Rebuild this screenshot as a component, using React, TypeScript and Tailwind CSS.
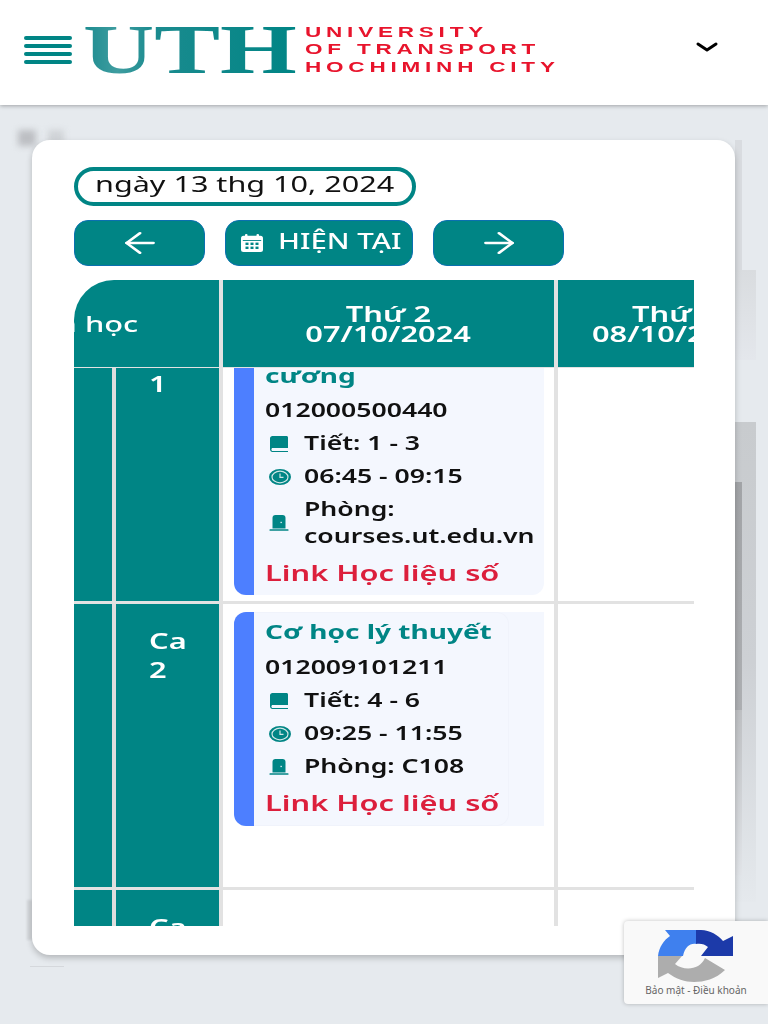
import { ArrowLeft, ArrowRight } from 'lucide-react';
import type { ReactNode } from 'react';

// the reference is stretched sideways, so text goes through this
function Wide({ children, origin = 'origin-left', className = '' }: { children: ReactNode; origin?: string; className?: string }) {
  return <span className={`inline-block whitespace-nowrap scale-x-[1.4] ${origin} ${className}`}>{children}</span>;
}

function BookIcon() {
  return (
    <svg viewBox="0 0 20 16" className="w-[20px] h-[16px]" fill="currentColor">
      <path d="M3.5 0H17.5C18.4 0 19 0.6 19 1.5V12H3.8C2.8 12 2.4 12.7 2.4 13.5C2.4 14.3 2.8 15 3.8 15H19V16H3.5C2 16 1 14.8 1 13.2V2.5C1 1 2 0 3.5 0Z" />
    </svg>
  );
}

function ClockIcon() {
  return (
    <svg viewBox="0 0 22 16" className="w-[22px] h-[16px]">
      <ellipse cx="11" cy="8" rx="11" ry="8" fill="currentColor" />
      <ellipse cx="11" cy="8" rx="8" ry="5.8" fill="none" stroke="#cfe6e6" strokeWidth="1.2" />
      <path d="M11 4.5V8.3H14.5" fill="none" stroke="#cfe6e6" strokeWidth="1.2" />
    </svg>
  );
}

function DoorIcon() {
  return (
    <svg viewBox="0 0 20 16" className="w-[20px] h-[16px]" fill="currentColor">
      <path d="M3.5 13.5V3C3.5 1.2 4.5 0 6.5 0H13.5C15.5 0 16.5 1.2 16.5 3V13.5Z" />
      <rect x="0.5" y="14.2" width="19" height="1.6" rx="0.5" />
      <rect x="11.5" y="6.8" width="1.3" height="1.3" fill="#f4f7fe" />
    </svg>
  );
}

function CalendarIcon() {
  return (
    <svg viewBox="0 0 22 18" className="w-[22px] h-[18px]" fill="white">
      <rect x="4" y="0" width="2.5" height="3" rx="1" />
      <rect x="15.5" y="0" width="2.5" height="3" rx="1" />
      <rect x="0" y="1.8" width="22" height="16.2" rx="2.5" />
      <g fill="#008585">
        <rect x="1.8" y="6" width="18.4" height="0.9" />
        <rect x="4.5" y="8.6" width="3" height="2.4" />
        <rect x="9.5" y="8.6" width="3" height="2.4" />
        <rect x="14.5" y="8.6" width="3" height="2.4" />
        <rect x="4.5" y="12.6" width="3" height="2.4" />
        <rect x="9.5" y="12.6" width="3" height="2.4" />
        <rect x="14.5" y="12.6" width="3" height="2.4" />
      </g>
    </svg>
  );
}

function InfoRow({ icon, lines, tall }: { icon: ReactNode; lines: string[]; tall?: boolean }) {
  return (
    <div className={`flex items-center ${tall ? 'h-[60px]' : 'h-[33px]'}`}>
      <span className="w-[39px] pl-[4px] text-[#008585]">{icon}</span>
      <div className="text-[19px] leading-[27px] font-semibold text-[#111]">
        {lines.map((line) => <div key={line}><Wide>{line}</Wide></div>)}
      </div>
    </div>
  );
}

function ClassCard({ title, code, period, time, room, clipped }: { title: string; code: string; period: string; time: string; room: string[]; clipped?: boolean }) {
  return (
    <div className={`relative flex w-[310px] ml-[11px] bg-[#f4f7fe] rounded-bl-xl overflow-hidden ${clipped ? 'h-[227px] rounded-br-xl' : 'h-[214px] rounded-tl-xl mt-[8px]'}`}>
      <div className="w-[20px] bg-[#4d7fff] shrink-0" />
      <div className={`pl-[11px] ${clipped ? '-mt-[6px]' : 'pt-[6px]'}`}>
        <div className="text-[20px] leading-[28px] font-bold text-[#008585]"><Wide>{title}</Wide></div>
        <div className={`text-[19px] leading-[27px] font-semibold text-[#111] ${clipped ? 'mt-[7px]' : 'mt-[8px]'}`}><Wide>{code}</Wide></div>
        <div className="mt-[3px]">
          <InfoRow icon={<BookIcon />} lines={[period]} />
          <InfoRow icon={<ClockIcon />} lines={[time]} />
          <InfoRow icon={<DoorIcon />} lines={room} tall={room.length > 1} />
        </div>
        <div className="text-[22px] leading-[32px] mt-[3px] font-semibold text-[#dc1f3c]"><Wide>Link Học liệu số</Wide></div>
      </div>
      {!clipped && <div className="absolute inset-y-0 left-[20px] w-[255px] rounded-r-xl border-y border-r border-[#f0f3fb]" />}
    </div>
  );
}

function ShiftRow({ height, label, top, children, last }: { height: string; label: string[]; top: string; children?: ReactNode; last?: boolean }) {
  return (
    <div className={`flex ${height} ${last ? '' : 'border-b-[3px] border-[#e2e2e2]'}`}>
      <div className="w-[38px] bg-[#008585] shrink-0" />
      <div className="w-[4px] bg-[#dedede] shrink-0" />
      <div className={`w-[103px] bg-[#008585] shrink-0 pl-[33px] text-white text-[22px] leading-[29px] font-semibold ${top}`}>
        {label.map((l) => <div key={l}><Wide>{l}</Wide></div>)}
      </div>
      <div className="w-[4px] bg-[#e2e2e2] shrink-0" />
      <div className="w-[331px] shrink-0 bg-white">{children}</div>
      <div className="w-[4px] bg-[#e2e2e2] shrink-0" />
      <div className="flex-1 bg-white" />
    </div>
  );
}

export default function App() {
  return (
    <div className="relative h-[1024px] overflow-hidden bg-[#e6eaee] font-['Noto_Sans','Open_Sans',sans-serif]">
      <header className="relative z-10 flex items-center h-[105px] bg-white shadow-[0_1px_4px_rgba(0,0,0,0.3)] pl-[24px] pr-[50px]">
        <div className="flex flex-col gap-[4px] w-[48px] -mt-[6px]">
          <div className="h-[4px] rounded-full bg-[#008585]" />
          <div className="h-[4px] rounded-full bg-[#008585]" />
          <div className="h-[4px] rounded-full bg-[#008585]" />
          <div className="h-[4px] rounded-full bg-[#008585]" />
        </div>
        <div className="flex items-center ml-[14px] -mt-[6px]">
          <div className="-ml-[3px] w-[212px] h-[48px] font-['Liberation_Serif',serif] font-bold text-[69px] leading-[48px]">
            <span className="inline-block origin-left scale-x-[1.43] text-transparent bg-clip-text bg-[linear-gradient(90deg,#1b8b8f_0%,#3f9da0_16%,#1b8b8f_32%,#008585_100%)]">UTH</span>
          </div>
          <div className="ml-[10px] font-['Liberation_Sans',sans-serif] font-bold text-[15px] leading-[17.5px] tracking-[3.2px] text-[#e8142c] origin-left scale-x-[1.5] -mt-[1px]">
            <div>UNIVERSITY</div>
            <div>OF TRANSPORT</div>
            <div>HOCHIMINH CITY</div>
          </div>
        </div>
        <svg viewBox="0 0 22 10" className="ml-auto -mt-[12px] w-[22px] h-[10px]" fill="none" stroke="black" strokeWidth="3" strokeLinecap="round" strokeLinejoin="round">
          <path d="M2 2L11 8L20 2" />
        </svg>
      </header>

      {/* blurred page behind the card */}
      <div className="absolute left-[18px] top-[130px] w-[18px] h-[16px] bg-[#bdbfc3] blur-[3px]" />
      <div className="absolute left-[48px] top-[130px] w-[16px] h-[14px] bg-[#d0d3d7] blur-[3px]" />
      <div className="absolute left-[27px] top-[900px] w-[6px] h-[40px] bg-[#d2d5d9] blur-[1px]" />
      <div className="absolute left-[30px] top-[966px] w-[34px] h-[1px] bg-[#d5d8dc]" />
      <div className="absolute left-[735px] top-[140px] w-[7px] h-[130px] bg-[#d9dce0]" />
      <div className="absolute left-[735px] top-[270px] w-[21px] h-[90px] bg-gradient-to-b from-[#d9dcdf] to-[#e4e7ec]" />
      <div className="absolute left-[735px] top-[422px] w-[21px] h-[480px] bg-gradient-to-b from-[#c8cbce] via-[#cdd0d4] to-[#e5e9ed]" />
      <div className="absolute left-[735px] top-[482px] w-[7px] h-[228px] bg-gradient-to-b from-[#a3a5a8] to-[#aeb0b3]" />
      <div className="absolute left-[735px] top-[710px] w-[7px] h-[165px] bg-gradient-to-b from-[#bfc1c4] to-[#e2e5e9]" />

      <main className="relative mx-[32px] mt-[35px] w-[703px] h-[815px] bg-white rounded-[18px] shadow-[0_3px_6px_rgba(0,0,0,0.22)] pl-[42px] pt-[27px]">
        <div className="flex items-center w-[342px] h-[39px] border-[4px] border-[#008585] rounded-full pl-[17px] bg-white text-[22px] text-[#111]">
          <Wide className="-mt-[7px] scale-x-[1.39]">ngày 13 thg 10, 2024</Wide>
        </div>

        <div className="flex gap-[20px] mt-[14px] text-white">
          <button className="flex items-center justify-center w-[131px] h-[46px] rounded-[14px] bg-[#008585] border border-[#0a70b0]">
            <ArrowLeft className="w-[34px] h-[34px] scale-x-[1.35]" strokeWidth={1.6} />
          </button>
          <button className="flex items-center w-[188px] h-[46px] rounded-[14px] bg-[#008585] border border-[#0a70b0] pl-[15px]">
            <CalendarIcon />
            <span className="ml-[15px] text-[21px] -mt-[3px] font-medium"><Wide>HIỆN TẠI</Wide></span>
          </button>
          <button className="flex items-center justify-center w-[131px] h-[46px] rounded-[14px] bg-[#008585] border border-[#0a70b0]">
            <ArrowRight className="w-[34px] h-[34px] scale-x-[1.35]" strokeWidth={1.6} />
          </button>
        </div>

        <div className="mt-[14px] w-[620px] h-[646px] overflow-hidden">
          <div className="flex h-[88px] border-b border-[#e2e2e2] text-white">
            <div className="w-[145px] shrink-0 bg-[#008585] rounded-tl-[40px] overflow-hidden flex items-center justify-end pr-[81px] text-[22px] font-medium">
              <Wide origin="origin-right">Môn học</Wide>
            </div>
            <div className="w-[4px] bg-[#e2e2e2] shrink-0" />
            <div className="w-[331px] shrink-0 bg-[#008585] flex flex-col items-center justify-center pb-[2px] text-[22px] leading-[20px] font-semibold">
              <Wide origin="origin-center">Thứ 2</Wide>
              <Wide origin="origin-center">07/10/2024</Wide>
            </div>
            <div className="w-[4px] bg-[#e2e2e2] shrink-0" />
            <div className="flex-1 bg-[#008585] overflow-hidden flex flex-col items-start pl-[34px] justify-center pb-[2px] text-[22px] leading-[20px] font-semibold">
              <div className="pl-[40px]"><Wide>Thứ 3</Wide></div>
              <Wide>08/10/2024</Wide>
            </div>
          </div>
          <ShiftRow height="h-[236px]" label={['1']} top="pt-[1px]">
            <ClassCard clipped title="cương" code="012000500440" period="Tiết: 1 - 3" time="06:45 - 09:15" room={['Phòng:', 'courses.ut.edu.vn']} />
          </ShiftRow>
          <ShiftRow height="h-[286px]" label={['Ca', '2']} top="pt-[22px]">
            <ClassCard title="Cơ học lý thuyết" code="012009101211" period="Tiết: 4 - 6" time="09:25 - 11:55" room={['Phòng: C108']} />
          </ShiftRow>
          <ShiftRow height="h-[60px]" label={['Ca']} top="pt-[22px]" last />
        </div>
      </main>

      {/* recaptcha badge */}
      <div className="absolute left-[624px] top-[921px] w-[144px] h-[83px] bg-[#f9f9f9] rounded-l-[4px] shadow-[0_0_4px_rgba(0,0,0,0.25)]">
        <svg viewBox="0 0 75 52" className="w-[75px] h-[52px] ml-[34px] mt-[9px]">
          <path d="M0 26C1 17 6 10 12 6L7 0H38V14C32 13 27 17 25 26Z" fill="#3f80ee" />
          <path d="M38 0H43C52 0 60 5 65 11L75 6V26H43L50 17C47 14 42 13 38 14Z" fill="#1c3aa9" />
          <path d="M0 26H24L17 34C23 39 33 40 40 36C43 34 45 32 47 28L67 40C58 49 46 52 36 52C27 52 18 49 10 43L0 48Z" fill="#adadad" />
        </svg>
        <div className="mt-[2px] text-center text-[10px] leading-[12px] text-[#666]">Bảo mật  -  Điều khoản</div>
      </div>
    </div>
  );
}
